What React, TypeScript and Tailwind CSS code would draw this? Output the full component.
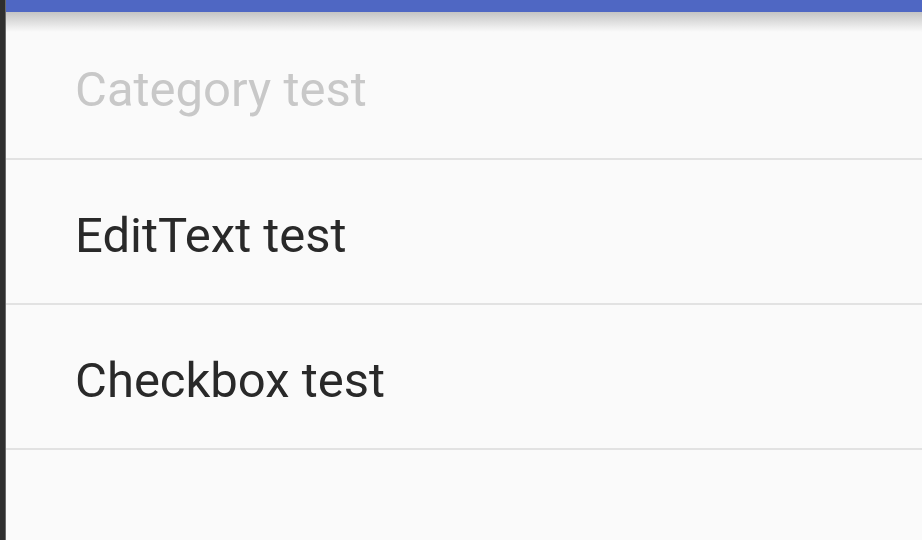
export default function App() {
  const rows = [
    { label: "Category test", category: true },
    { label: "EditText test", category: false },
    { label: "Checkbox test", category: false },
  ];

  return (
    <div className="flex h-[540px] w-[922px] overflow-hidden bg-[#fafafa] font-['Roboto',sans-serif]">
      <div className="flex w-[6px] shrink-0">
        <div className="w-[5px] bg-[#2f2f2f]" />
        <div className="w-[1px] bg-[#6a6a6a]" />
      </div>

      <div className="flex min-w-0 flex-1 flex-col">
        <div className="h-[12px] shrink-0 bg-[#4f67c3]" />
        <div className="relative flex flex-col">
          <div className="pointer-events-none absolute inset-x-0 top-0 h-[20px] bg-gradient-to-b from-[#c4c4c4] to-transparent" />
          {rows.map((row, i) => (
            <div
              key={row.label}
              className={
                i === 0
                  ? "flex h-[148px] items-center border-b-2 border-[#e2e2e2] pl-[69px] pt-[8px]"
                  : "flex h-[145px] items-center border-b-2 border-[#e2e2e2] pl-[69px] pt-[8px]"
              }
            >
              <span
                className={
                  row.category
                    ? "text-[49px] leading-none text-[#c8c8c8]"
                    : "text-[49px] leading-none text-[#292929]"
                }
              >
                {row.label}
              </span>
            </div>
          ))}
        </div>
      </div>
    </div>
  );
}
